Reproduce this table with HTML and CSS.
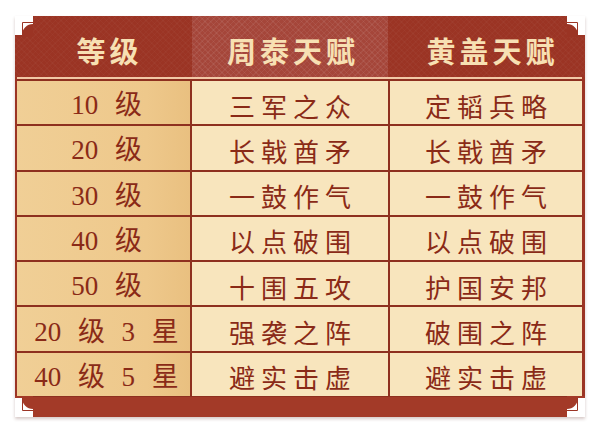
FILE: index.html
```html
<!DOCTYPE html>
<html lang="zh">
<head>
<meta charset="utf-8">
<link rel="stylesheet" href="styles.css">
</head>
<body>
<div class="frame">
  <div class="head">
    <div class="hcell"><span>等级</span></div>
    <div class="hcell hl"><span>周泰天赋</span></div>
    <div class="hcell"><span>黄盖天赋</span></div>
  </div>
  <div class="light"></div>
  <div class="grid">
    <div class="c lv">10 级</div><div class="c"><span>三军之众</span></div><div class="c"><span>定韬兵略</span></div>
    <div class="c lv">20 级</div><div class="c"><span>长戟酋矛</span></div><div class="c"><span>长戟酋矛</span></div>
    <div class="c lv">30 级</div><div class="c"><span>一鼓作气</span></div><div class="c"><span>一鼓作气</span></div>
    <div class="c lv">40 级</div><div class="c"><span>以点破围</span></div><div class="c"><span>以点破围</span></div>
    <div class="c lv">50 级</div><div class="c"><span>十围五攻</span></div><div class="c"><span>护国安邦</span></div>
    <div class="c lv">20 级 3 星</div><div class="c"><span>强袭之阵</span></div><div class="c"><span>破围之阵</span></div>
    <div class="c lv">40 级 5 星</div><div class="c"><span>避实击虚</span></div><div class="c"><span>避实击虚</span></div>
  </div>
  <div class="foot"></div>

  <svg class="corner tl" viewBox="0 0 18 21" width="18" height="21"><rect width="18" height="21" fill="#fff"/><path d="M18 8 A11 11 0 0 0 7 19 L0 19 L0 21 L18 21 Z" fill="#9b3424"/><path d="M7.5 19 V6.5 H18" stroke="#9b3424" stroke-width="1" fill="none"/></svg>
  <svg class="corner tr" viewBox="0 0 18 21" width="18" height="21"><rect width="18" height="21" fill="#fff"/><path d="M18 8 A11 11 0 0 0 7 19 L0 19 L0 21 L18 21 Z" fill="#9b3424"/><path d="M7.5 19 V6.5 H18" stroke="#9b3424" stroke-width="1" fill="none"/></svg>
  <svg class="corner bl" viewBox="0 0 18 21" width="18" height="21"><rect width="18" height="21" fill="#fff"/><path d="M18 8 A11 11 0 0 0 7 19 L0 19 L0 21 L18 21 Z" fill="#a33a28"/><path d="M7.5 19 V6.5 H18" stroke="#9b3424" stroke-width="1" fill="none"/></svg>
  <svg class="corner br" viewBox="0 0 18 21" width="18" height="21"><rect width="18" height="21" fill="#fff"/><path d="M18 8 A11 11 0 0 0 7 19 L0 19 L0 21 L18 21 Z" fill="#a33a28"/><path d="M7.5 19 V6.5 H18" stroke="#9b3424" stroke-width="1" fill="none"/></svg>
</div>
</body>
</html>
```

FILE: styles.css
```css
html, body {
  margin: 0;
  padding: 0;
  background: #ffffff;
}
body {
  width: 600px;
  height: 434px;
  overflow: hidden;
}
.frame {
  position: relative;
  margin: 16px 0 0 15px;
  width: 570px;
  background: #9b3424;
  box-shadow: 0 2px 3px rgba(90, 40, 30, 0.25);
}
.head {
  display: grid;
  grid-template-columns: 177px 196px 1fr;
  height: 61px;
}
.hcell {
  display: flex;
  justify-content: center;
  align-items: center;
  padding-top: 8px;
  padding-left: 8px;
  box-sizing: border-box;
  font-family: "Noto Sans CJK SC", sans-serif;
  font-weight: 700;
  font-size: 29px;
  line-height: 1;
  letter-spacing: 4px;
  color: #f7e0b3;
  background-color: #9b3424;
  background-image:
    repeating-linear-gradient(45deg, rgba(255,255,255,0.025) 0 1px, transparent 1px 4px),
    repeating-linear-gradient(-45deg, rgba(255,255,255,0.025) 0 1px, transparent 1px 4px);
}
.hcell span {
  margin-right: -4px;
}
.hcell.hl {
  background-color: #a5463a;
  background-image:
    repeating-linear-gradient(45deg, rgba(255,255,255,0.06) 0 1px, transparent 1px 4px),
    repeating-linear-gradient(-45deg, rgba(255,255,255,0.06) 0 1px, transparent 1px 4px);
  padding-left: 2px;
}
.light {
  height: 2px;
  margin: 0 3px 0 2px;
  background: #f2c8a6;
}
.grid {
  display: grid;
  grid-template-columns: 173px 196px 1fr;
  grid-template-rows: repeat(7, minmax(0, 1fr));
  gap: 2px;
  height: 318px;
  box-sizing: border-box;
  padding: 2px 0 1px;
  margin: 0 3px 0 2px;
  background: #8e301f;
}
.c {
  display: flex;
  justify-content: center;
  align-items: center;
  min-height: 0;
  padding-top: 6px;
  box-sizing: border-box;
  background: #f8e5bd;
  color: #8a2a17;
  font-family: "Noto Sans CJK SC", sans-serif;
  font-size: 26px;
  line-height: 1;
  letter-spacing: 6px;
  white-space: pre;
  overflow: hidden;
}
.c span {
  margin-right: -6px;
}
.c.lv {
  background: linear-gradient(90deg, #f0cf96 0%, #eec88b 75%, #e9c080 100%);
  font-family: "Liberation Serif", "Noto Sans CJK SC", serif;
  font-size: 27px;
  letter-spacing: 0;
  word-spacing: 10px;
  padding-left: 6px;
}
.foot {
  height: 20px;
  background: #a33a28;
}
.corner {
  position: absolute;
  display: block;
}
.corner.tl { left: 0; top: 0; }
.corner.tr { right: 0; top: 0; transform: scaleX(-1); }
.corner.bl { left: 0; bottom: 0; transform: scaleY(-1); }
.corner.br { right: 0; bottom: 0; transform: scale(-1, -1); }
```
